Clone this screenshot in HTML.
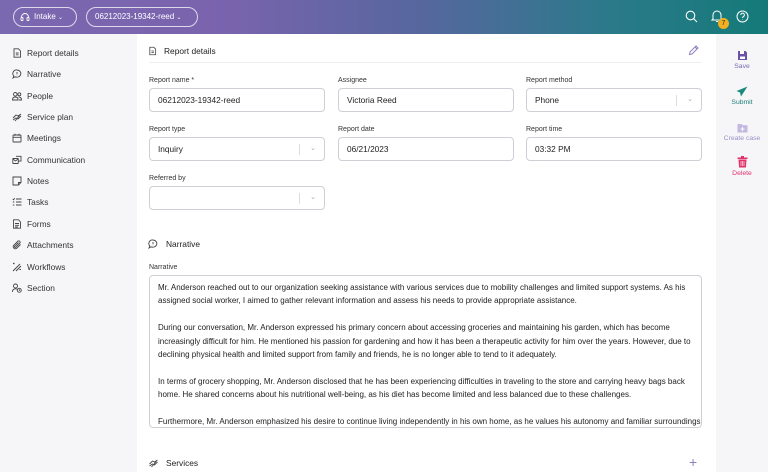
<!DOCTYPE html>
<html><head><meta charset="utf-8"><style>
*{box-sizing:border-box;margin:0;padding:0}
body{width:768px;height:472px;overflow:hidden;font-family:"Liberation Sans",sans-serif;color:#222;background:#fff;position:relative}
.hdr{position:absolute;left:0;top:0;width:768px;height:34px;background:linear-gradient(90deg,#7a68b0 0%,#7b63ae 28%,#56679e 55%,#2a7a8a 80%,#147a78 100%)}
.pill{position:absolute;top:7px;height:20px;border:1px solid rgba(255,255,255,.75);border-radius:10px;color:#fff;font-size:8px;line-height:18px;padding-left:8px}
.side{position:absolute;left:0;top:34px;width:137px;height:438px;background:#f6f6f9}
.si{position:absolute;left:12px;font-size:8.4px;color:#333;display:flex;align-items:center}
.si svg{width:10px;height:10px;margin-right:5px}
.right{position:absolute;left:716px;top:34px;width:52px;height:438px;background:#f6f6f9}
.act{position:absolute;left:0;width:52px;text-align:center;font-size:6.8px}
.lbl{position:absolute;font-size:7px;color:#333}
.inp{position:absolute;height:24px;border:1px solid #cfcfd6;border-radius:4px;font-size:8.3px;line-height:22px;padding-left:8px;color:#222}
.dd::after{content:"";position:absolute;right:24px;top:6px;height:11px;border-left:1px solid #ddd}
.dd span{position:absolute;right:8px;top:0;color:#aaa;font-size:7px}
.h{position:absolute;font-size:8.4px;color:#222}
.ta{position:absolute;left:149px;top:275px;width:553px;height:153px;border:1px solid #cfcfd6;border-radius:4px;overflow:hidden;padding:5px 8px;font-size:8px;line-height:13.4px;color:#222;white-space:nowrap}
</style></head><body>
<div class="hdr">
<div class="pill" style="left:13px;width:64px;padding-left:20px"><svg style="position:absolute;left:6px;top:4px" width="10" height="10" viewBox="0 0 10 10" fill="none" stroke="#fff" stroke-width=".9"><path d="M1.5 6V5a3.5 3.5 0 017 0v1"/><rect x="1" y="5.5" width="2" height="3" rx=".6"/><rect x="7" y="5.5" width="2" height="3" rx=".6"/></svg>Intake <span style="font-size:6px">⌄</span></div>
<div class="pill" style="left:86px;width:112px">06212023-19342-reed <span style="font-size:6px">⌄</span></div>
<svg style="position:absolute;left:685px;top:10px" width="13" height="13" viewBox="0 0 13 13" fill="none" stroke="#fff" stroke-width="1.1"><circle cx="5.5" cy="5.5" r="4.3"/><path d="M8.6 8.6L12 12"/></svg>
<svg style="position:absolute;left:711px;top:9px" width="12" height="14" viewBox="0 0 12 14" fill="none" stroke="#fff" stroke-width="1"><path d="M2 10V6a4 4 0 018 0v4l1 1H1z M5 12.5h2"/></svg>
<div style="position:absolute;left:718px;top:18px;width:11px;height:11px;border-radius:50%;background:#f0b020;color:#333;font-size:7px;text-align:center;line-height:11px">7</div>
<svg style="position:absolute;left:736px;top:10px" width="13" height="13" viewBox="0 0 13 13" fill="none" stroke="#fff" stroke-width="1"><circle cx="6.5" cy="6.5" r="5.5"/><path d="M4.8 5a1.8 1.8 0 113 1.3c-.8.5-1.3.8-1.3 1.7M6.5 9.5v.4"/></svg>
</div>
<div class="side">
<div class="si" style="top:14px"><svg viewBox="0 0 10 10" fill="none" stroke="#444" stroke-width=".9"><path d="M2 .8h4.5L8.5 3v6.2H2z"/><path d="M3.8 5h2.8M3.8 6.8h2.8"/></svg>Report details</div>
<div class="si" style="top:35px"><svg viewBox="0 0 10 10" fill="none" stroke="#444" stroke-width=".9"><path d="M5 1a4 3.6 0 11-2 6.8L1 9l.8-2A3.6 3.6 0 015 1zM5 3v2.3M5 6.5v.3"/></svg>Narrative</div>
<div class="si" style="top:57px"><svg viewBox="0 0 10 10" fill="none" stroke="#444" stroke-width=".9"><circle cx="3.3" cy="3.3" r="1.8"/><circle cx="7.3" cy="3.3" r="1.5"/><path d="M.5 9c0-2 1.2-3 2.8-3s2.8 1 2.8 3zM6.5 6c1.8 0 3 .8 3 3H7"/></svg>People</div>
<div class="si" style="top:78px"><svg viewBox="0 0 10 10" fill="none" stroke="#444" stroke-width=".9"><path d="M1 6l3-3 2 1 3-2M1 8l3-2 2 1 3-3M3 9l5-6"/></svg>Service plan</div>
<div class="si" style="top:99px"><svg viewBox="0 0 10 10" fill="none" stroke="#444" stroke-width=".9"><rect x="1" y="2" width="8" height="7" rx=".8"/><path d="M1 4.3h8M3 .8v2M7 .8v2"/></svg>Meetings</div>
<div class="si" style="top:121px"><svg viewBox="0 0 10 10" fill="none" stroke="#444" stroke-width=".9"><rect x=".8" y="3.5" width="5.5" height="5" rx=".5"/><path d="M.8 4l2.7 2 2.8-2M4 1.3h5v4.8H6.3"/></svg>Communication</div>
<div class="si" style="top:142px"><svg viewBox="0 0 10 10" fill="none" stroke="#444" stroke-width=".9"><path d="M1 1h8v5.5L6.5 9H1z M6.5 9V6.5H9"/></svg>Notes</div>
<div class="si" style="top:163px"><svg viewBox="0 0 10 10" fill="none" stroke="#444" stroke-width=".9"><path d="M4 2h5.5M4 5h5.5M4 8h5.5M.8 2l.7.7L2.8 1.3M.8 5h1.5M.8 8h1.5"/></svg>Tasks</div>
<div class="si" style="top:185px"><svg viewBox="0 0 10 10" fill="none" stroke="#444" stroke-width=".9"><path d="M1.5.8h5L8.5 3v6.2h-7z"/><path d="M3 4.5h4M3 6.3h4M3 8h3"/></svg>Forms</div>
<div class="si" style="top:206px"><svg viewBox="0 0 10 10" fill="none" stroke="#444" stroke-width=".9"><path d="M8.5 4.5L4.5 8.5a2.2 2.2 0 01-3-3l4.5-4.5a1.5 1.5 0 012 2L3.7 7.3a.7.7 0 01-1-1L6.5 2.5"/></svg>Attachments</div>
<div class="si" style="top:228px"><svg viewBox="0 0 10 10" fill="none" stroke="#444" stroke-width=".9"><path d="M1 9l7-7M4 9l5-5M1 1.5h1.5M2 .8v1.5M7.5 7.5h1.5"/></svg>Workflows</div>
<div class="si" style="top:249px"><svg viewBox="0 0 10 10" fill="none" stroke="#444" stroke-width=".9"><circle cx="3.5" cy="3" r="2"/><path d="M.5 9c0-2.2 1.3-3.2 3-3.2 1 0 1.6.3 2 .7"/><circle cx="7.3" cy="7.3" r="2"/><path d="M7.3 6.3v1h.8"/></svg>Section</div>
</div>

<svg style="position:absolute;left:148px;top:46px" width="9" height="10" viewBox="0 0 10 10" fill="none" stroke="#444" stroke-width=".9"><path d="M2 .8h4.5L8.5 3v6.2H2z"/><path d="M3.8 5h2.8M3.8 6.8h2.8"/></svg>
<div class="h" style="left:164px;top:46px">Report details</div>
<svg style="position:absolute;left:688px;top:45px" width="11" height="11" viewBox="0 0 11 11" fill="none" stroke="#8f7fc0" stroke-width="1"><path d="M1.5 9.5l.5-2.5 6-6 2 2-6 6z M7 2l2 2"/></svg>
<div style="position:absolute;left:149px;top:62px;width:553px;border-top:1px solid #eee"></div>

<div class="lbl" style="left:149px;top:77px">Report name *</div>
<div class="inp" style="left:149px;top:88px;width:176px">06212023-19342-reed</div>
<div class="lbl" style="left:338px;top:77px">Assignee</div>
<div class="inp" style="left:338px;top:88px;width:176px">Victoria Reed</div>
<div class="lbl" style="left:526px;top:77px">Report method</div>
<div class="inp dd" style="left:526px;top:88px;width:176px">Phone<span>⌄</span></div>

<div class="lbl" style="left:149px;top:126px">Report type</div>
<div class="inp dd" style="left:149px;top:137px;width:176px">Inquiry<span>⌄</span></div>
<div class="lbl" style="left:338px;top:126px">Report date</div>
<div class="inp" style="left:338px;top:137px;width:176px">06/21/2023</div>
<div class="lbl" style="left:526px;top:126px">Report time</div>
<div class="inp" style="left:526px;top:137px;width:176px">03:32 PM</div>

<div class="lbl" style="left:149px;top:175px">Referred by</div>
<div class="inp dd" style="left:149px;top:186px;width:176px"><span>⌄</span></div>

<svg style="position:absolute;left:148px;top:239px" width="10" height="10" viewBox="0 0 10 10" fill="none" stroke="#444" stroke-width=".9"><path d="M5 1a4 3.6 0 11-2 6.8L1 9l.8-2A3.6 3.6 0 015 1zM5 3v2.3M5 6.5v.3"/></svg>
<div class="h" style="left:166px;top:239px">Narrative</div>
<div class="lbl" style="left:149px;top:264px">Narrative</div>
<div class="ta">
<div>Mr. Anderson reached out to our organization seeking assistance with various services due to mobility challenges and limited support systems. As his</div>
<div>assigned social worker, I aimed to gather relevant information and assess his needs to provide appropriate assistance.</div>
<div>&nbsp;</div>
<div>During our conversation, Mr. Anderson expressed his primary concern about accessing groceries and maintaining his garden, which has become</div>
<div>increasingly difficult for him. He mentioned his passion for gardening and how it has been a therapeutic activity for him over the years. However, due to</div>
<div>declining physical health and limited support from family and friends, he is no longer able to tend to it adequately.</div>
<div>&nbsp;</div>
<div>In terms of grocery shopping, Mr. Anderson disclosed that he has been experiencing difficulties in traveling to the store and carrying heavy bags back</div>
<div>home. He shared concerns about his nutritional well-being, as his diet has become limited and less balanced due to these challenges.</div>
<div>&nbsp;</div>
<div>Furthermore, Mr. Anderson emphasized his desire to continue living independently in his own home, as he values his autonomy and familiar surroundings.</div>
<div>He mentioned feeling isolated at times and expressed interest in participating in social activities to combat loneliness.</div>
</div>

<svg style="position:absolute;left:148px;top:458px" width="11" height="10" viewBox="0 0 10 10" fill="none" stroke="#444" stroke-width=".9"><path d="M1 6l3-3 2 1 3-2M1 8l3-2 2 1 3-3M3 9l5-6"/></svg>
<div class="h" style="left:166px;top:458px">Services</div>
<div style="position:absolute;left:689px;top:454px;color:#8f7fc0;font-size:14px">+</div>

<div class="right">
<div class="act" style="top:16px;color:#7a68b0"><svg width="11" height="11" viewBox="0 0 11 11"><path d="M1 1h7.5L10 2.5V10H1z" fill="#6b52a8"/><rect x="3" y="1" width="4" height="3" fill="#fff"/><rect x="3" y="6.5" width="5" height="2.5" fill="#fff"/></svg><div>Save</div></div>
<div class="act" style="top:52px;color:#1a7f76"><svg width="12" height="11" viewBox="0 0 12 11"><path d="M11.5.5L.5 5l3.5 1.5L5 10.5z" fill="#1a8a7f"/></svg><div>Submit</div></div>
<div class="act" style="top:89px;color:#9a8fc6"><svg width="11" height="10" viewBox="0 0 11 10"><path d="M.5 1h4l1 1.3h5V9.5H.5z" fill="#c2b8e0"/><path d="M5.5 4v4M3.5 6h4" stroke="#fff" stroke-width="1"/></svg><div>Create case</div></div>
<div class="act" style="top:122px;color:#e0336a"><svg width="11" height="12" viewBox="0 0 11 12"><rect x="0.5" y="1.5" width="10" height="1.5" fill="#e0336a"/><rect x="4" y="0" width="3" height="1.5" fill="#e0336a"/><path d="M1.5 3.5h8l-.6 8h-6.8z" fill="#e0336a"/><path d="M4 5v5M5.5 5v5M7 5v5" stroke="#fff" stroke-width=".6"/></svg><div>Delete</div></div>
</div>
</body></html>
